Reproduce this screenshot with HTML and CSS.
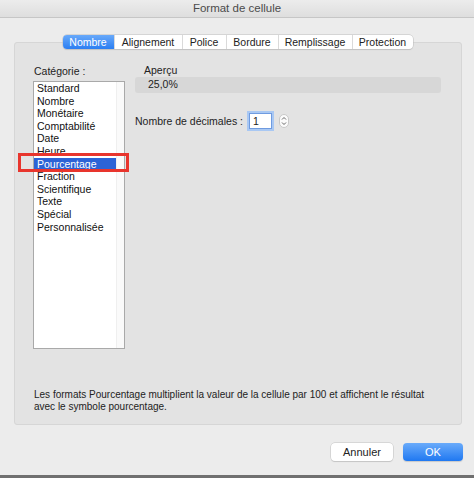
FILE: index.html
```html
<!DOCTYPE html>
<html lang="fr">
<head>
<meta charset="utf-8">
<title>Format de cellule</title>
<link rel="stylesheet" href="styles.css">
</head>
<body>
<div class="window">
  <div class="titlebar">Format de cellule</div>
  <div class="body">
    <div class="tabs">
      <div class="tab active t1">Nombre</div>
      <div class="tab t2">Alignement</div>
      <div class="tab t3">Police</div>
      <div class="tab t4">Bordure</div>
      <div class="tab t5">Remplissage</div>
      <div class="tab t6">Protection</div>
    </div>
    <div class="panel">
      <div class="columns">
        <div class="left">
          <div class="label">Catégorie :</div>
          <div class="listbox">
            <ul class="items">
              <li>Standard</li>
              <li>Nombre</li>
              <li>Monétaire</li>
              <li>Comptabilité</li>
              <li>Date</li>
              <li>Heure</li>
              <li class="selected">Pourcentage</li>
              <li>Fraction</li>
              <li>Scientifique</li>
              <li>Texte</li>
              <li>Spécial</li>
              <li>Personnalisée</li>
            </ul>
            <div class="track"></div>
          </div>
        </div>
        <div class="right">
          <div class="preview-label">Aperçu</div>
          <div class="preview">25,0%</div>
          <div class="decimals">
            <span class="dec-label">Nombre de décimales :</span>
            <span class="input">1</span>
            <span class="stepper">
              <svg width="10" height="14" viewBox="0 0 10 14">
                <path d="M3 5.5 L5 3.5 L7 5.5" fill="none" stroke="#555" stroke-width="0.9"/>
                <path d="M3 8.5 L5 10.5 L7 8.5" fill="none" stroke="#555" stroke-width="0.9"/>
              </svg>
            </span>
          </div>
        </div>
      </div>
      <p class="desc">Les formats Pourcentage multiplient la valeur de la cellule par 100 et affichent le résultat avec le symbole pourcentage.</p>
    </div>
    <div class="buttons">
      <div class="btn">Annuler</div>
      <div class="btn primary">OK</div>
    </div>
  </div>
  <div class="desktop"></div>
  <div class="highlight-box"></div>
</div>
</body>
</html>
```
FILE: styles.css
```css
* { box-sizing: border-box; }
html, body {
  margin: 0;
  padding: 0;
  width: 474px;
  height: 478px;
  overflow: hidden;
  background: #ececec;
  font-family: "Liberation Sans", Arial, sans-serif;
  color: #222;
}
.window {
  position: relative;
  width: 474px;
  height: 478px;
  display: flex;
  flex-direction: column;
}
.titlebar {
  height: 18px;
  flex: none;
  background: linear-gradient(#ececec, #dedede);
  border-bottom: 1px solid #c6c6c6;
  text-align: center;
  font-size: 11.5px;
  line-height: 17px;
  color: #4b4b4b;
}
.body {
  flex: 1;
  padding-top: 17px;
  display: flex;
  flex-direction: column;
}
.tabs {
  position: relative;
  z-index: 2;
  align-self: center;
  display: flex;
  height: 14px;
  margin-left: 1px;
  margin-bottom: -7px;
  background: #fff;
  border-radius: 4px;
  box-shadow: 0 0 0 0.5px #bdbdbd, 0 1px 1px rgba(0,0,0,0.12);
}
.tab {
  font-size: 10.5px;
  line-height: 14px;
  text-align: center;
  color: #222;
  border-left: 1px solid #dadada;
}
.tab:first-child { border-left: none; }
.tab.active {
  background: linear-gradient(#68a9fa, #2b7ef2);
  color: #fff;
  border-radius: 4px 0 0 4px;
}
.t1 { width: 51px; }
.t2 { width: 68px; }
.t3 { width: 44px; }
.t4 { width: 52px; }
.t5 { width: 74px; }
.t6 { width: 61px; }
.panel {
  margin-left: 14px;
  width: 448px;
  height: 383px;
  flex: none;
  background: #e3e3e3;
  border: 1px solid #d6d6d6;
  border-radius: 3px;
  padding: 22px 14px 12px 18px;
  display: flex;
  flex-direction: column;
}
.columns {
  display: flex;
}
.left {
  width: 92px;
  flex: none;
}
.label {
  font-size: 10.5px;
  line-height: 13px;
  margin-bottom: 3px;
  padding-left: 1px;
}
.listbox {
  height: 268px;
  background: #fff;
  border: 1px solid #a9a9a9;
  display: flex;
}
.items {
  list-style: none;
  margin: 0;
  padding: 0;
  flex: 1;
}
.items li {
  font-size: 10.5px;
  line-height: 12.6px;
  height: 12.6px;
  padding-left: 3px;
  color: #111;
}
.items li.selected {
  background: #2c63d6;
  color: #fff;
}
.track {
  width: 8px;
  flex: none;
  background: #fafafa;
  border-left: 1px solid #efefef;
}
.right {
  margin-left: 10px;
  width: 306px;
}
.preview-label {
  font-size: 10.5px;
  line-height: 13px;
  padding-left: 9px;
  margin-top: -1px;
}
.preview {
  height: 16px;
  background: #d7d7d7;
  border-radius: 3px;
  font-size: 10.5px;
  line-height: 15px;
  padding-left: 13px;
}
.decimals {
  display: flex;
  align-items: center;
  margin-top: 20px;
}
.dec-label {
  font-size: 10.5px;
  line-height: 16px;
}
.input {
  margin-left: 6px;
  width: 23px;
  height: 16px;
  background: #fff;
  border: 1px solid #6f9be0;
  box-shadow: 0 0 0 2px #a9c8f3;
  font-size: 10.5px;
  line-height: 14px;
  padding-left: 3px;
}
.stepper {
  margin-left: 7px;
  width: 10px;
  height: 14px;
  background: #fbfbfb;
  border: 1px solid #c9c9c9;
  border-radius: 5px;
  display: flex;
  align-items: center;
  justify-content: center;
}
.stepper svg { display: block; flex: none; }
.desc {
  margin: auto 0 0 0;
  font-size: 10px;
  line-height: 11.5px;
  padding-left: 1px;
  color: #222;
}
.buttons {
  display: flex;
  justify-content: flex-end;
  gap: 10px;
  margin-top: 18px;
  padding-right: 11px;
}
.btn {
  width: 62px;
  height: 18px;
  background: #fff;
  border-radius: 4px;
  box-shadow: 0 0 0 0.5px #c2c2c2, 0 1px 1px rgba(0,0,0,0.15);
  font-size: 11px;
  line-height: 18px;
  text-align: center;
  color: #222;
}
.btn.primary {
  width: 60px;
  background: linear-gradient(#6aabfa, #1f78f1);
  color: #fff;
  box-shadow: 0 1px 1px rgba(0,0,0,0.15);
}
.desktop {
  position: absolute;
  left: 0;
  bottom: 0;
  width: 474px;
  height: 3px;
  background: #707070;
}
.highlight-box {
  position: absolute;
  left: 18px;
  top: 153px;
  width: 111px;
  height: 19px;
  border: 3px solid #e8352d;
}
```
